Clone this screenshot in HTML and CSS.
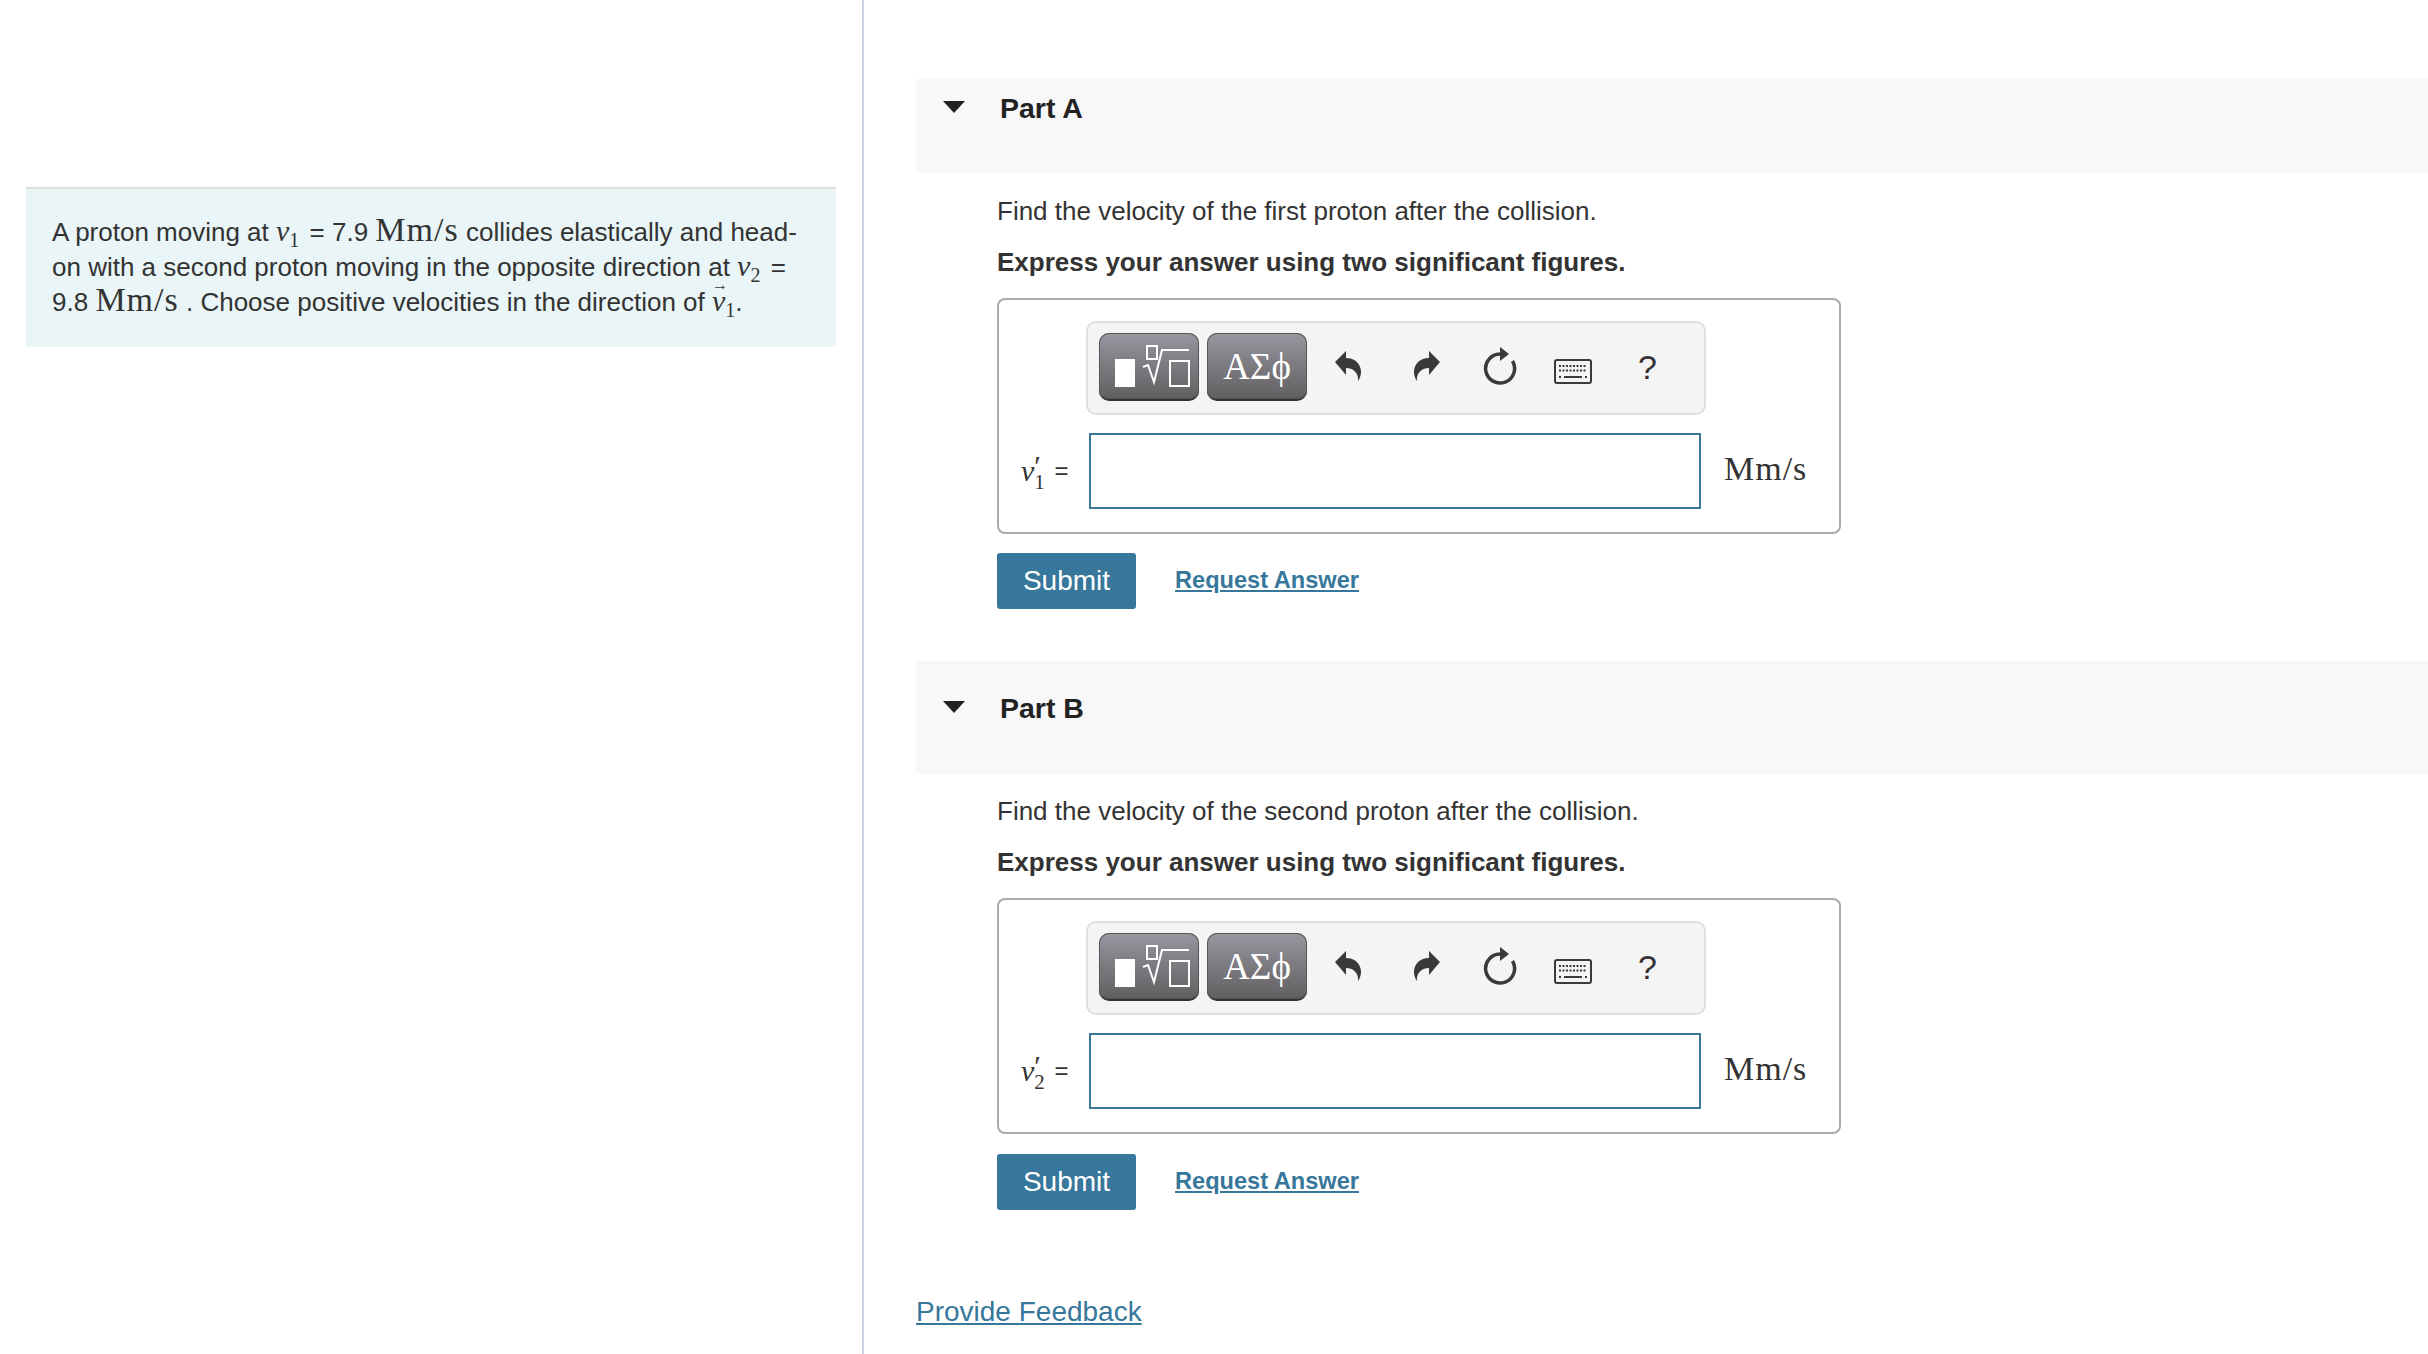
FILE: index.html
```html
<!DOCTYPE html>
<html lang="en">
<head>
    <meta charset="UTF-8">
    <title>Collision of protons</title>
    <link rel="stylesheet" href="styles.css">
</head>
<body>
    <svg class="sprite" width="0" height="0">
        <symbol id="icon-templates" viewBox="0 0 100 68">
            <rect x="16" y="26" width="20" height="28" fill="#fff"/>
            <rect x="48" y="13" width="10" height="13" fill="none" stroke="#fff" stroke-width="2"/>
            <path d="M44 34l5-2 6 17 8-32h27" fill="none" stroke="#fff" stroke-width="2"/>
            <rect x="71" y="28" width="19" height="25" fill="none" stroke="#fff" stroke-width="2"/>
        </symbol>
        <symbol id="icon-undo" viewBox="0 0 28 32">
            <path d="M1 12L12 1v7c9 0 15 6 15 14 0 4-2 8-3 9 1-7-4-13-12-13v7z" fill="#3a3a3a"/>
        </symbol>
        <symbol id="icon-redo" viewBox="0 0 28 32">
            <path d="M27 12L16 1v7C7 8 1 14 1 22c0 4 2 8 3 9-1-7 4-13 12-13v7z" fill="#3a3a3a"/>
        </symbol>
        <symbol id="icon-reset" viewBox="0 0 34 38">
            <path d="M29.500 14A14.500 14.500 0 1 1 17 7" fill="none" stroke="#3a3a3a" stroke-width="3.500"/>
            <path d="M17 0l9 7-9 7z" fill="#3a3a3a"/>
        </symbol>
        <symbol id="icon-keyboard" viewBox="0 0 38 25">
            <rect x="1" y="1" width="36" height="23" rx="2" fill="none" stroke="#3a3a3a" stroke-width="2"/>
            <path d="M5 7h28M5 11.500h28" stroke="#3a3a3a" stroke-width="2" stroke-dasharray="2 1.500"/>
            <path d="M5 18h2M10 18h18M31 18h2" stroke="#3a3a3a" stroke-width="2"/>
        </symbol>
    </svg>

    <div class="page">
        <aside class="left-pane">
            <div class="intro">
                A proton moving at <i class="var">v</i><sub class="idx">1</sub> = 7.9 <span class="unit">Mm/s</span> collides elastically and head-on with a second proton moving in the opposite direction at <i class="var">v</i><sub class="idx">2</sub> = 9.8 <span class="unit">Mm/s</span> . Choose positive velocities in the direction of <i class="var vec">v</i><sub class="idx tight">1</sub>.
            </div>
        </aside>

        <main class="right-pane">
            <section class="part">
                <header class="part-head">
                    <span class="caret"></span>
                    <h2>Part A</h2>
                </header>
                <div class="part-body">
                    <p class="prompt">Find the velocity of the first proton after the collision.</p>
                    <p class="prompt strong">Express your answer using two significant figures.</p>
                    <div class="answer-box">
                        <div class="toolbar">
                            <button class="tool-btn"><svg class="tool-svg"><use href="#icon-templates"/></svg></button>
                            <button class="tool-btn greek">ΑΣϕ</button>
                            <svg class="icon undo"><use href="#icon-undo"/></svg>
                            <svg class="icon redo"><use href="#icon-redo"/></svg>
                            <svg class="icon reset"><use href="#icon-reset"/></svg>
                            <svg class="icon keyboard"><use href="#icon-keyboard"/></svg>
                            <span class="help">?</span>
                        </div>
                        <div class="answer-row">
                            <label class="answer-label"><i class="var">v</i><span class="scripts"><span class="prime">′</span><span>1</span></span> =</label>
                            <input class="answer-input" type="text">
                            <span class="unit answer-unit">Mm/s</span>
                        </div>
                    </div>
                    <div class="actions">
                        <button class="submit">Submit</button>
                        <a class="request" href="#">Request Answer</a>
                    </div>
                </div>
            </section>

            <section class="part">
                <header class="part-head tall">
                    <span class="caret"></span>
                    <h2>Part B</h2>
                </header>
                <div class="part-body">
                    <p class="prompt">Find the velocity of the second proton after the collision.</p>
                    <p class="prompt strong">Express your answer using two significant figures.</p>
                    <div class="answer-box">
                        <div class="toolbar">
                            <button class="tool-btn"><svg class="tool-svg"><use href="#icon-templates"/></svg></button>
                            <button class="tool-btn greek">ΑΣϕ</button>
                            <svg class="icon undo"><use href="#icon-undo"/></svg>
                            <svg class="icon redo"><use href="#icon-redo"/></svg>
                            <svg class="icon reset"><use href="#icon-reset"/></svg>
                            <svg class="icon keyboard"><use href="#icon-keyboard"/></svg>
                            <span class="help">?</span>
                        </div>
                        <div class="answer-row">
                            <label class="answer-label"><i class="var">v</i><span class="scripts"><span class="prime">′</span><span>2</span></span> =</label>
                            <input class="answer-input" type="text">
                            <span class="unit answer-unit">Mm/s</span>
                        </div>
                    </div>
                    <div class="actions">
                        <button class="submit">Submit</button>
                        <a class="request" href="#">Request Answer</a>
                    </div>
                </div>
            </section>

            <a class="feedback" href="#">Provide Feedback</a>
        </main>
    </div>
</body>
</html>
```

FILE: styles.css
```css
html, body {
    margin: 0;
    height: 100%;
    overflow: hidden;
}

body {
    font-family: "Liberation Sans", Arial, sans-serif;
    color: #333;
    background: #fff;
}

.sprite {
    display: none;
}

.page {
    display: flex;
    height: 1354px;
}

.left-pane {
    width: 864px;
    flex: none;
    box-sizing: border-box;
    border-right: 2px solid #c9d2de;
    padding: 187px 26px 0 26px;
}

.intro {
    background: #e9f5f7;
    border-top: 2px solid #dedede;
    padding: 26px 26px 0;
    font-size: 26px;
    line-height: 35px;
    height: 160px;
    box-sizing: border-box;
}

.var {
    font-family: "Liberation Serif", serif;
    font-style: italic;
    font-size: 30px;
    line-height: 0;
}

.idx {
    font-size: 20px;
    line-height: 0;
    font-family: "Liberation Serif", serif;
    margin-right: 3px;
}

.idx.tight {
    margin-right: 0;
}

.vec {
    position: relative;
}

.vec::after {
    content: "→";
    position: absolute;
    left: 0;
    top: -7px;
    font-size: 16px;
    line-height: 16px;
    font-style: normal;
}

.unit {
    font-family: "Liberation Serif", serif;
    font-size: 34px;
    letter-spacing: 1px;
    line-height: 0;
}

.right-pane {
    flex: 1;
    padding: 79px 0 0 52px;
    min-width: 0;
}

.part-head {
    display: flex;
    align-items: flex-start;
    gap: 35px;
    height: 94px;
    background: #f8f8f8;
    padding: 0 0 0 27px;
    box-sizing: border-box;
}

.part-head.tall {
    height: 113px;
    padding-top: 18px;
}

.caret {
    margin-top: 22px;
    width: 0;
    height: 0;
    border-left: 11px solid transparent;
    border-right: 11px solid transparent;
    border-top: 12px solid #222;
}

.part-head h2 {
    margin: 13px 0 0;
    font-size: 28.500px;
    line-height: 32px;
    color: #222;
}

.part-body {
    padding: 21px 0 0 81px;
}

.part-head.tall + .part-body {
    padding-top: 20px;
}

.prompt {
    margin: 0 0 17px;
    font-size: 26px;
    line-height: 34px;
}

.prompt.strong {
    font-weight: bold;
    margin-bottom: 19px;
}

.answer-box {
    width: 844px;
    height: 236px;
    box-sizing: border-box;
    border: 2px solid #aaa;
    border-radius: 8px;
    padding: 21px 0 0 87px;
}

.toolbar {
    display: flex;
    align-items: center;
    width: 620px;
    height: 94px;
    box-sizing: border-box;
    border: 2px solid #e0e0e0;
    border-radius: 10px;
    background: #f4f4f4;
    padding: 0 0 2px 11px;
}

.tool-btn {
    width: 100px;
    height: 68px;
    margin-right: 8px;
    padding: 0;
    flex: none;
    border: 0;
    border-bottom: 2px solid #333;
    border-radius: 10px;
    background: linear-gradient(#98969f, #605f60);
    box-shadow: inset 0 0 0 1px #555;
}

.tool-svg {
    display: block;
    width: 100px;
    height: 68px;
}

.greek {
    color: #fff;
    font-family: "Liberation Serif", serif;
    font-size: 37px;
}

.icon {
    flex: none;
}

.undo {
    width: 28px;
    height: 32px;
    margin: 0 0 2px 19px;
}

.redo {
    width: 28px;
    height: 32px;
    margin: 0 0 2px 51px;
}

.reset {
    width: 34px;
    height: 38px;
    margin: 0 0 2px 42px;
}

.keyboard {
    width: 38px;
    height: 25px;
    margin: 8px 0 0 37px;
}

.help {
    margin-left: 46px;
    font-size: 34px;
    color: #333;
}

.answer-row {
    display: flex;
    align-items: center;
    margin-left: -65px;
    margin-top: 18px;
}

.answer-label {
    display: flex;
    align-items: center;
    width: 68px;
    flex: none;
    font-size: 24px;
    white-space: pre;
}

.scripts {
    display: inline-flex;
    flex-direction: column;
    font-family: "Liberation Serif", serif;
    font-size: 21px;
    line-height: 17px;
    margin: 6px 3px 0 0;
}

.prime {
    font-size: 30px;
}

.answer-input {
    width: 612px;
    height: 76px;
    box-sizing: border-box;
    border: 2px solid #37779b;
    flex: none;
    outline: 0;
}

.answer-unit {
    margin-left: 23px;
    position: relative;
    top: -2px;
}

.actions {
    display: flex;
    align-items: center;
    gap: 39px;
    margin-top: 19px;
}

.part-head.tall + .part-body .actions {
    margin-top: 20px;
}

.submit {
    width: 139px;
    height: 56px;
    border: 0;
    border-radius: 3px;
    background: #37779b;
    color: #fff;
    font-family: "Liberation Sans", Arial, sans-serif;
    font-size: 28px;
}

.request {
    color: #37779b;
    font-size: 23.600px;
    font-weight: bold;
    margin-bottom: 2px;
}

.part + .part {
    margin-top: 52px;
}

.feedback {
    display: inline-block;
    margin-top: 86px;
    color: #37779b;
    font-size: 28px;
}
```
